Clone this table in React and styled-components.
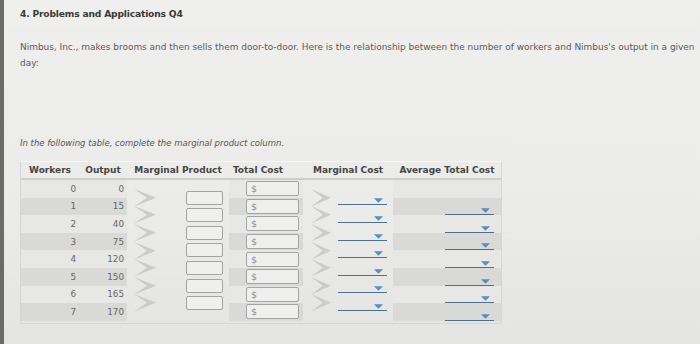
import React from 'react'
import styled, { createGlobalStyle } from 'styled-components'

const ROW = 17.6

const rows = [
  { workers: 0, output: 0 },
  { workers: 1, output: 15 },
  { workers: 2, output: 40 },
  { workers: 3, output: 75 },
  { workers: 4, output: 120 },
  { workers: 5, output: 150 },
  { workers: 6, output: 165 },
  { workers: 7, output: 170 },
]

const GlobalStyle = createGlobalStyle`
  html, body {
    margin: 0;
    padding: 0;
  }
  body {
    background: linear-gradient(to bottom, #efefed 0%, #ebebe9 60%, #e4e4e2 100%);
    font-family: "DejaVu Sans", Verdana, sans-serif;
    color: #555;
  }
`

const Chevron = () => (
  <ChevronSvg viewBox="0 0 22 17.6" preserveAspectRatio="none">
    <polygon points="0,0 22,8.8 0,17.6 13,8.8" />
  </ChevronSvg>
)

const Dropdown = () => (
  <Select>
    <Caret viewBox="0 0 10 5">
      <polygon points="0,0 10,0 5,5" />
    </Caret>
  </Select>
)

const App = () => {
  return (
    <>
      <GlobalStyle />
      <Page>
        <Title>4. Problems and Applications Q4</Title>
        <Intro>
          Nimbus, Inc., makes brooms and then sells them door-to-door. Here is the relationship between the number of workers and Nimbus's output in a given
          <br />
          day:
        </Intro>
        <Instruction>In the following table, complete the marginal product column.</Instruction>

        <Table>
          <HeadRow>
            <HeadCell>Workers</HeadCell>
            <HeadCell>Output</HeadCell>
            <HeadCell>Marginal Product</HeadCell>
            <HeadCell $shift={-8}>Total Cost</HeadCell>
            <HeadCell>Marginal Cost</HeadCell>
            <HeadCell>Average Total Cost</HeadCell>
          </HeadRow>

          <Body>
            <Column>
              {rows.map((r, i) => (
                <NumCell key={r.workers} $dark={i % 2 === 1}>{r.workers}</NumCell>
              ))}
            </Column>

            <Column>
              {rows.map((r, i) => (
                <NumCell key={r.output} $dark={i % 2 === 1}>{r.output}</NumCell>
              ))}
            </Column>

            <BetweenColumn>
              {rows.slice(1).map((r) => (
                <BetweenItem key={r.workers}>
                  <ChevronSlot $left={7}><Chevron /></ChevronSlot>
                  <Box $left={30} />
                </BetweenItem>
              ))}
            </BetweenColumn>

            <Column>
              {rows.map((r, i) => (
                <InputCell key={r.workers} $dark={i % 2 === 1}>
                  <MoneyBox>$</MoneyBox>
                </InputCell>
              ))}
            </Column>

            <BetweenColumn>
              {rows.slice(1).map((r) => (
                <BetweenItem key={r.workers}>
                  <ChevronSlot $left={8} $width={20}><Chevron /></ChevronSlot>
                  <DropSlot $left={7} $bottom={1}>
                    <Dropdown />
                  </DropSlot>
                </BetweenItem>
              ))}
            </BetweenColumn>

            <Column>
              {rows.map((r, i) => (
                <AvgCell key={r.workers} $dark={i % 2 === 1}>
                  {i > 0 && <Dropdown />}
                </AvgCell>
              ))}
            </Column>
          </Body>
        </Table>
      </Page>
    </>
  )
}

const Page = styled.div`
  min-height: 344px;
  box-sizing: border-box;
  border-left: 4px solid #6b6b6a;
  padding: 7px 0 0 16px;
`

const Title = styled.h1`
  margin: 0;
  font-size: 9.2px;
  letter-spacing: -0.2px;
  line-height: 14px;
  font-weight: bold;
  color: #3a3a3a;
`

const Intro = styled.p`
  margin: 18px 0 0;
  font-size: 8.95px;
  line-height: 16px;
  color: #5a5a5a;
  white-space: nowrap;
`

const Instruction = styled.p`
  margin: 64px 0 0;
  font-size: 8.5px;
  line-height: 16px;
  font-style: italic;
  color: #555;
`

const Table = styled.div`
  margin-top: 10px;
  width: 480px;
  border: 1px solid #d6d6d4;
  border-top-color: #f6f6f4;
  padding-bottom: 2px;
`

const COLS = '58px 48px 102px 74px 90px 108px'

const HeadRow = styled.div`
  display: grid;
  grid-template-columns: ${COLS};
  height: 16px;
  border-bottom: 2px solid #cdcdcb;
  align-items: center;
`

const HeadCell = styled.div`
  text-align: center;
  font-size: 9px;
  font-weight: bold;
  color: #454545;
  white-space: nowrap;
  transform: translateX(${(p) => p.$shift || 0}px);
`

const Body = styled.div`
  display: grid;
  grid-template-columns: ${COLS};
`

const Column = styled.div`
  display: flex;
  flex-direction: column;
`

const Cell = styled.div`
  height: ${ROW}px;
  display: flex;
  align-items: center;
  background: ${(p) => (p.$dark ? '#d9d9d7' : '#e7e7e5')};
`

const NumCell = styled(Cell)`
  justify-content: flex-end;
  padding-right: 3px;
  font-size: 8.8px;
  color: #666;
`

const InputCell = styled(Cell)`
  padding-left: 17px;
`

const AvgCell = styled(Cell)`
  align-items: flex-end;
  padding-left: 52px;
`

const BetweenColumn = styled.div`
  display: flex;
  flex-direction: column;
  padding-top: ${ROW / 2}px;
`

const BetweenItem = styled.div`
  height: ${ROW}px;
  display: flex;
  align-items: center;
`

const ChevronSlot = styled.div`
  margin-left: ${(p) => p.$left}px;
  width: ${(p) => p.$width || 22}px;
  height: ${ROW}px;
  display: flex;
`

const ChevronSvg = styled.svg`
  width: 100%;
  height: 100%;
  fill: #cbcbc9;
`

const Box = styled.div`
  margin-left: ${(p) => p.$left}px;
  width: 37px;
  height: 14px;
  box-sizing: border-box;
  border: 1px solid #a3a3a1;
  border-radius: 2px;
  background: #efefed;
`

const MoneyBox = styled.div`
  width: 53px;
  height: 15px;
  box-sizing: border-box;
  border: 1px solid #a3a3a1;
  border-radius: 2px;
  background: #efefed;
  padding-left: 4px;
  font-size: 9.5px;
  line-height: 13px;
  color: #8c8c8a;
`

const DropSlot = styled.div`
  margin-left: ${(p) => p.$left}px;
  align-self: flex-end;
  margin-bottom: ${(p) => p.$bottom}px;
`

const Select = styled.div`
  width: 49px;
  height: 10px;
  box-sizing: border-box;
  border-bottom: 1.5px solid #4f6e88;
  display: flex;
  justify-content: flex-end;
  align-items: flex-start;
  padding: 3px 4px 0 0;
`

const Caret = styled.svg`
  width: 9px;
  height: 5px;
  fill: #5a8dbd;
`

export default App
